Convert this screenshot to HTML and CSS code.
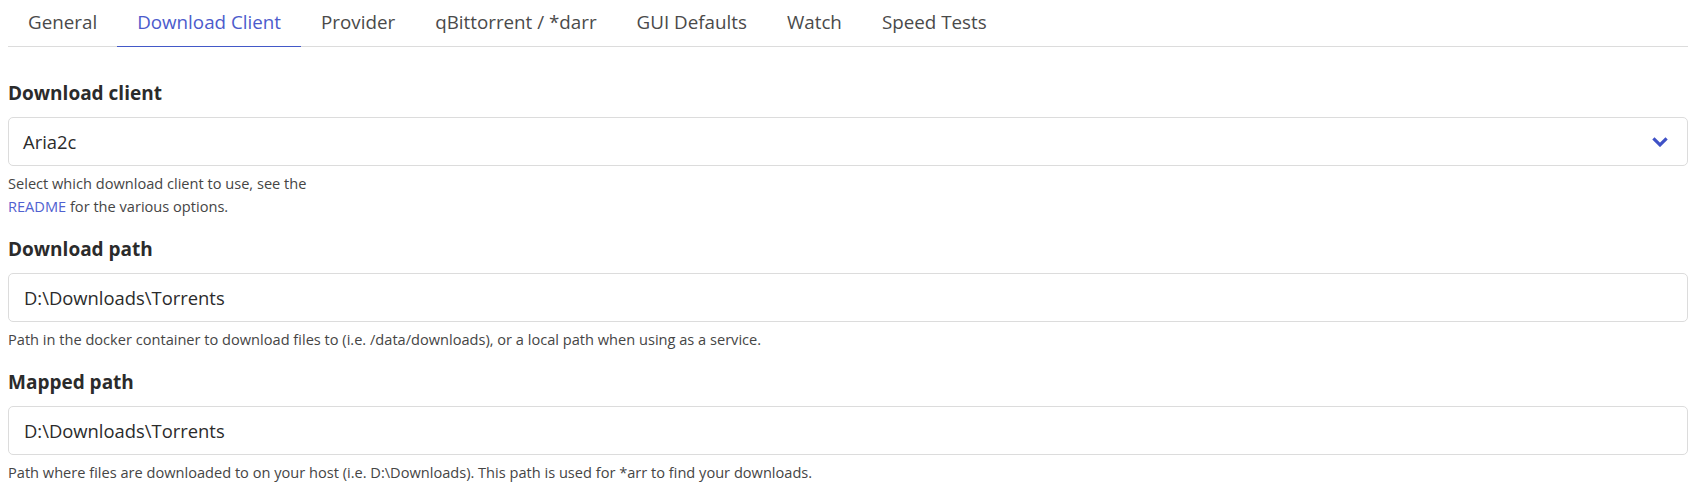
FILE: index.html
```html
<!DOCTYPE html>
<html lang="en">
<head>
<meta charset="utf-8">
<title>Settings - Download Client</title>
<link rel="stylesheet" href="styles.css">
</head>
<body>
<div class="page">
  <nav class="tabs">
    <a class="tab">General</a>
    <a class="tab active">Download Client</a>
    <a class="tab">Provider</a>
    <a class="tab">qBittorrent / *darr</a>
    <a class="tab">GUI Defaults</a>
    <a class="tab">Watch</a>
    <a class="tab">Speed Tests</a>
  </nav>

  <form class="form">
    <div class="field">
      <label class="label">Download client</label>
      <div class="select">
        <span class="select-value">Aria2c</span>
        <svg class="chevron" width="16" height="10" viewBox="0 0 16 10" aria-hidden="true">
          <polyline points="1.4,1.4 8,7.9 14.6,1.4" fill="none" stroke="#3f51c6" stroke-width="3.2"/>
        </svg>
      </div>
      <p class="help">Select which download client to use, see the<br><a class="link">README</a> for the various options.</p>
    </div>

    <div class="field">
      <label class="label">Download path</label>
      <input class="input" type="text" value="D:\Downloads\Torrents">
      <p class="help">Path in the docker container to download files to (i.e. /data/downloads), or a local path when using as a service.</p>
    </div>

    <div class="field">
      <label class="label">Mapped path</label>
      <input class="input" type="text" value="D:\Downloads\Torrents">
      <p class="help">Path where files are downloaded to on your host (i.e. D:\Downloads). This path is used for *arr to find your downloads.</p>
    </div>
  </form>
</div>
</body>
</html>
```

FILE: styles.css
```css
* { box-sizing: border-box; }

html, body {
  margin: 0;
  padding: 0;
  background: #ffffff;
}

body {
  font-family: "Open Sans", "Noto Sans", "Liberation Sans", sans-serif;
  color: #212529;
}

.page {
  width: 1680px;
  margin-left: 8px;
}

.tabs {
  display: flex;
  border-bottom: 1px solid #dcdcdc;
  height: 47px;
}

.tab {
  display: flex;
  align-items: center;
  height: 47px;
  padding: 0 20px 2px;
  font-size: 18.8px;
  color: #4a4a4a;
  border-bottom: 1px solid transparent;
  margin-bottom: -1px;
  white-space: nowrap;
}

.tab.active {
  color: #4c5bcc;
  border-bottom-color: #4359c8;
}

.form {
  padding-top: 31px;
}

.field {
  margin-bottom: 16px;
}

.label {
  display: block;
  font-size: 19px;
  font-weight: 700;
  line-height: 30px;
  color: #2b2b2b;
  margin-bottom: 9px;
}

.select,
.input {
  width: 100%;
  height: 49px;
  border: 1px solid #dcdcdc;
  border-radius: 5px;
  background: #ffffff;
  font-family: inherit;
  font-size: 18.4px;
  color: #2b2b2b;
}

.select {
  display: flex;
  align-items: center;
  justify-content: space-between;
  padding: 0 19px 0 14px;
}

.input {
  display: block;
  padding: 0 14px 1px 15px;
  outline: none;
}

.chevron {
  display: block;
  flex: none;
}

.help {
  margin: 6px 0 0;
  font-size: 14.6px;
  line-height: 23px;
  color: #454545;
}

.link {
  color: #5061d0;
  text-decoration: none;
}
```
